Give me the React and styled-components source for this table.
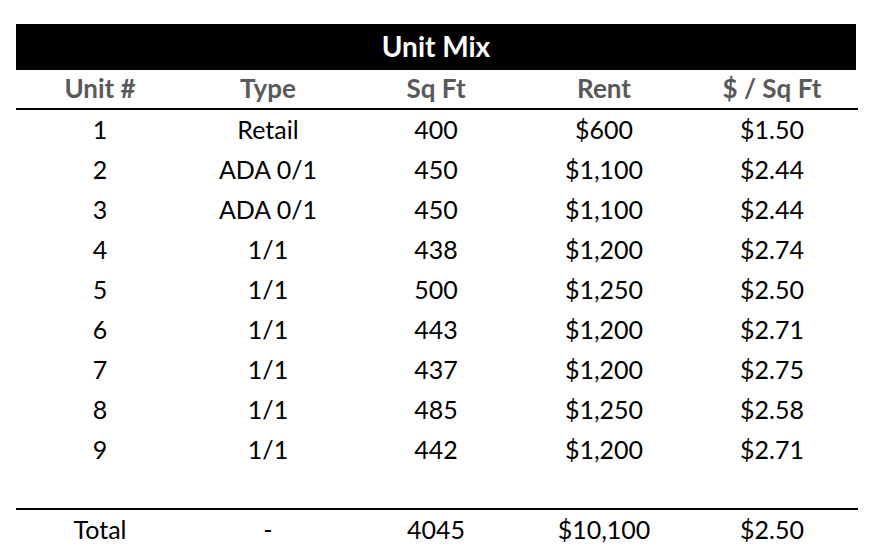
import React from "react";
import styled, { createGlobalStyle } from "styled-components";

const GlobalStyle = createGlobalStyle`
  html, body { margin: 0; padding: 0; background: #ffffff; }
  body { font-family: "Lato", "Open Sans", "Liberation Sans", sans-serif; }
`;

const Page = styled.div`
  padding: 24px 0 0 16px;
  width: 886px;
  box-sizing: border-box;
`;

const Table = styled.div`
  width: 842px;
  display: flex;
  flex-direction: column;
`;

const TitleBar = styled.div`
  width: 840px;
  height: 46px;
  background: #000;
  color: #fff;
  font-weight: 700;
  font-size: 28px;
  display: flex;
  align-items: center;
  justify-content: center;
  padding-bottom: 3px;
  box-sizing: border-box;
`;

const Row = styled.div`
  display: grid;
  grid-template-columns: repeat(5, 168px);
  height: ${(p) => p.$h || 40}px;
  align-items: center;
  border-bottom: ${(p) => (p.$rule ? "2px solid #000" : "none")};
  color: ${(p) => (p.$head ? "#595959" : "#000")};
  font-weight: ${(p) => (p.$head ? 700 : 400)};
  font-size: ${(p) => (p.$head ? 26 : 25)}px;
  padding-bottom: 3px;
  box-sizing: content-box;
`;

const Cell = styled.div`
  text-align: center;
  white-space: nowrap;
`;

const rows = [
  ["1", "Retail", "400", "$600", "$1.50"],
  ["2", "ADA 0/1", "450", "$1,100", "$2.44"],
  ["3", "ADA 0/1", "450", "$1,100", "$2.44"],
  ["4", "1/1", "438", "$1,200", "$2.74"],
  ["5", "1/1", "500", "$1,250", "$2.50"],
  ["6", "1/1", "443", "$1,200", "$2.71"],
  ["7", "1/1", "437", "$1,200", "$2.75"],
  ["8", "1/1", "485", "$1,250", "$2.58"],
  ["9", "1/1", "442", "$1,200", "$2.71"],
];

export default function App() {
  return (
    <Page>
      <GlobalStyle />
      <Table>
        <TitleBar>Unit Mix</TitleBar>
        <Row $head $rule $h={35}>
          {["Unit #", "Type", "Sq Ft", "Rent", "$ / Sq Ft"].map((h) => (
            <Cell key={h}>{h}</Cell>
          ))}
        </Row>
        {rows.map((r) => (
          <Row key={r[0]} $h={37}>
            {r.map((c, i) => (
              <Cell key={i}>{c}</Cell>
            ))}
          </Row>
        ))}
        <Row $rule $h={35} />
        <Row $h={37}>
          {["Total", "-", "4045", "$10,100", "$2.50"].map((c, i) => (
            <Cell key={i}>{c}</Cell>
          ))}
        </Row>
      </Table>
    </Page>
  );
}
